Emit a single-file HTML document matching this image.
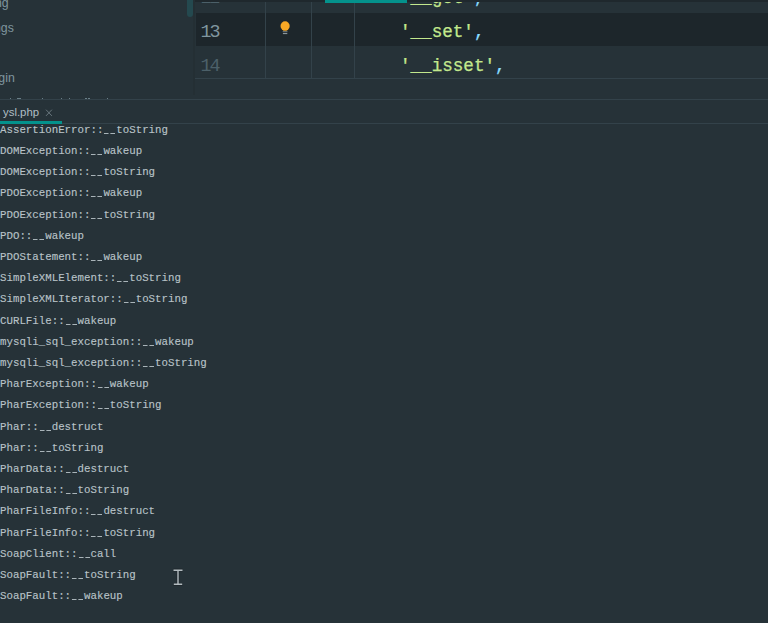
<!DOCTYPE html>
<html><head><meta charset="utf-8">
<style>
html,body{margin:0;padding:0;width:768px;height:623px;overflow:hidden;background:#263238;}
body{position:relative;font-family:"Liberation Sans",sans-serif;}
.abs{position:absolute;}
.tree{position:absolute;left:0;top:0;width:195px;height:99px;background:#263238;overflow:hidden;}
.tree .t{position:absolute;white-space:nowrap;font-size:12.3px;color:#7f959e;line-height:14px;}
.editor{position:absolute;left:195px;top:0;width:573px;height:79px;background:#263238;overflow:hidden;}
.mono{font-family:"Liberation Mono",monospace;}
.code{position:absolute;white-space:pre;font-size:17.6px;line-height:20px;color:#c3e88d;-webkit-text-stroke:0.25px #c3e88d;}
.ln{position:absolute;white-space:pre;font-size:18.4px;line-height:20px;letter-spacing:-2.2px;}
.out{position:absolute;left:0;top:119.8px;width:768px;}
.out .u{color:transparent;-webkit-text-stroke:0;background-image:linear-gradient(to right,transparent 0 0.5px,#a9b4b9 0.5px 5.9px,transparent 5.9px);background-size:6.468px 1.2px;background-repeat:repeat-x;background-position:0 8.9px;}
.out .l{-webkit-text-stroke:0.12px #b9c3c8;position:absolute;left:0;white-space:pre;font-family:"Liberation Mono",monospace;font-size:10.78px;line-height:21.2px;color:#b9c3c8;}
</style></head><body>

<div class="tree">
  <div class="t" style="left:-5px;top:-4px;">ng</div>
  <div class="t" style="left:-6px;top:21px;">ngs</div>
  <div class="t" style="left:-1.7px;top:71px;">gin</div>
  <div class="abs" style="left:9.5px;top:97.5px;width:1.5px;height:1.5px;background:#6a7f88;"></div>
  <div class="abs" style="left:17px;top:97.5px;width:4px;height:1.5px;background:#6a7f88;"></div>
  <div class="abs" style="left:41.5px;top:97.5px;width:1.5px;height:1.5px;background:#6a7f88;"></div>
  <div class="abs" style="left:60.5px;top:97.5px;width:1.5px;height:1.5px;background:#6a7f88;"></div>
  <div class="abs" style="left:68.5px;top:97.5px;width:1.5px;height:1.5px;background:#6a7f88;"></div>
  <div class="abs" style="left:85px;top:97.5px;width:1.5px;height:1.5px;background:#6a7f88;"></div>
  <div class="abs" style="left:88px;top:97.5px;width:1.5px;height:1.5px;background:#6a7f88;"></div>
  <div class="abs" style="left:106.5px;top:97.5px;width:1.5px;height:1.5px;background:#6a7f88;"></div>
  <div class="abs" style="left:187.3px;top:-3px;width:5.5px;height:19.6px;background:#24494f;border-radius:3px;"></div>
  <div class="abs" style="left:193px;top:0;width:2.5px;height:95px;background:#242f34;"></div>
</div>

<div class="editor">
  
  
  <div class="abs" style="left:1px;top:12.7px;width:572px;height:33.6px;background:#1d262b;"></div>
  <div class="abs" style="left:70px;top:2px;width:1px;height:77px;background:#33424a;"></div>
  <div class="abs" style="left:116px;top:2px;width:1px;height:77px;background:#33424a;"></div>
  <div class="abs" style="left:158.6px;top:2px;width:1px;height:77px;background:#33424a;"></div>
  <div class="abs" style="left:0;top:78px;width:573px;height:1px;background:#33424a;"></div>

  <div class="ln mono" style="left:5.6px;top:-10.6px;color:#4c6069;">12</div>
  <div class="ln mono" style="left:5.6px;top:22.9px;color:#80969f;">13</div>
  <div class="ln mono" style="left:5.6px;top:56.5px;color:#4c6069;">14</div>

  <svg class="abs" style="left:84px;top:20px;" width="12" height="16" viewBox="0 0 12 16">
    <circle cx="6.1" cy="5.9" r="4.6" fill="#f9a825"/>
    <path d="M3.4 8.5 L8.8 8.5 L8.2 10.6 L4 10.6 Z" fill="#f9a825"/>
    <rect x="3.7" y="11" width="4.8" height="1.1" fill="#5f6b71"/>
    <rect x="3.9" y="12.9" width="4.4" height="1.2" fill="#8b969b"/>
  </svg>

  <div class="code mono" style="left:205px;top:-12px;">'__get'<span style="color:#89ddff;-webkit-text-stroke-color:#89ddff">,</span></div>
  <div class="code mono" style="left:205px;top:22px;">'__set'<span style="color:#89ddff;-webkit-text-stroke-color:#89ddff">,</span></div>
  <div class="code mono" style="left:205px;top:56px;">'__isset'<span style="color:#89ddff;-webkit-text-stroke-color:#89ddff">,</span></div>
  <div class="abs" style="left:0;top:0;width:573px;height:2px;background:#1f282d;z-index:5"></div>
  <div class="abs" style="left:130px;top:0;width:82px;height:2.5px;background:#04928c;z-index:6"></div>
</div>

<div class="abs" style="left:0;top:99px;width:768px;height:1px;background:#33424a;"></div>

<div class="abs" style="left:3px;top:106px;font-size:11.4px;color:#b0bec5;white-space:nowrap;">ysl.php</div>
<svg class="abs" style="left:45px;top:109px;" width="8" height="8" viewBox="0 0 8 8"><path d="M1 0.7L6.9 6.9M6.9 0.7L1 6.9" stroke="#6f7e85" stroke-width="0.9" fill="none"/></svg>
<div class="abs" style="left:62px;top:123px;width:706px;height:1px;background:#33424a;"></div>
<div class="abs" style="left:0;top:120.5px;width:62px;height:3.5px;background:#04928c;"></div>

<div class="out">
<div class="l">AssertionError::<span class="u">__</span>toString
DOMException::<span class="u">__</span>wakeup
DOMException::<span class="u">__</span>toString
PDOException::<span class="u">__</span>wakeup
PDOException::<span class="u">__</span>toString
PDO::<span class="u">__</span>wakeup
PDOStatement::<span class="u">__</span>wakeup
SimpleXMLElement::<span class="u">__</span>toString
SimpleXMLIterator::<span class="u">__</span>toString
CURLFile::<span class="u">__</span>wakeup
mysqli_sql_exception::<span class="u">__</span>wakeup
mysqli_sql_exception::<span class="u">__</span>toString
PharException::<span class="u">__</span>wakeup
PharException::<span class="u">__</span>toString
Phar::<span class="u">__</span>destruct
Phar::<span class="u">__</span>toString
PharData::<span class="u">__</span>destruct
PharData::<span class="u">__</span>toString
PharFileInfo::<span class="u">__</span>destruct
PharFileInfo::<span class="u">__</span>toString
SoapClient::<span class="u">__</span>call
SoapFault::<span class="u">__</span>toString
SoapFault::<span class="u">__</span>wakeup</div>
</div>

<svg class="abs" style="left:172px;top:568px;" width="12" height="19" viewBox="0 0 12 19">
  <path d="M1.5 2h9M6 2.5v14M1.5 16.5h9" stroke="#1a2226" stroke-width="3" fill="none" opacity="0.6"/>
  <path d="M1.5 2.3h9M6 2.5v14M1.8 16.3h8.4" stroke="#b3bcc0" stroke-width="1.4" fill="none"/>
</svg>
</body></html>
